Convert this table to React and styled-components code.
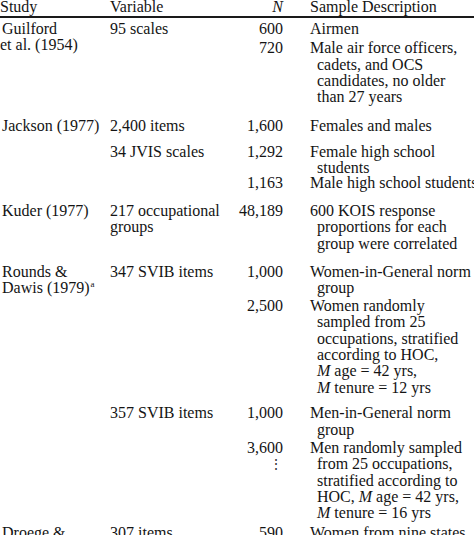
import React from 'react';
import styled, { createGlobalStyle } from 'styled-components';

const Global = createGlobalStyle`
  html, body { margin: 0; padding: 0; background: #fff; overflow: hidden; }
  body { font-family: "Liberation Serif", "Times New Roman", serif; color: #141414; }
`;

const Table = styled.div`
  width: 474px;
  margin-top: -1px;
  font-size: 16px;
  line-height: 16.3px;
`;

const HeaderRow = styled.div`
  display: flex;
  padding-bottom: 0.5px;
  border-bottom: 2px solid #1a1a1a;
  line-height: 16.5px;
`;

const Body = styled.div`
  display: flex;
  flex-direction: column;
  padding-top: 3px;
`;

const Group = styled.div`
  display: flex;
  margin-top: ${p => p.$mt || 0}px;
`;

const StudyCell = styled.div`
  width: ${p => p.$w || 108}px;
  flex: none;
  padding-left: ${p => (p.$pad == null ? 2 : p.$pad)}px;
  white-space: nowrap;
`;

const VarList = styled.div`
  display: flex;
  flex-direction: column;
  flex: 1;
`;

const VarRow = styled.div`
  display: flex;
  margin-top: ${p => p.$mt || 0}px;
`;

const VarCell = styled.div`
  width: 127px;
  flex: none;
  white-space: nowrap;
`;

const EntryList = styled.div`
  display: flex;
  flex-direction: column;
  flex: 1;
`;

const Entry = styled.div`
  display: flex;
  margin-top: ${p => p.$mt || 0}px;
`;

const NCell = styled.div`
  width: 46px;
  flex: none;
  text-align: right;
  white-space: nowrap;
  font-style: ${p => (p.$italic ? 'italic' : 'normal')};
  display: flex;
  flex-direction: column;
  align-items: flex-end;
`;

const Dots = styled.span`
  font-size: 14px;
  line-height: 16px;
  margin-top: 1px;
  color: #333;
`;

const DescCell = styled.div`
  padding-left: 27px;
  white-space: nowrap;
  display: flex;
  flex-direction: column;
`;

const Line = styled.span`
  display: block;
  padding-left: ${p => (p.$cont ? 7 : 0)}px;
  margin-left: ${p => p.$shift || 0}px;
`;

const I = styled.i`
  font-style: italic;
`;

const Sup = styled.sup`
  font-size: 9px;
  line-height: 0;
  vertical-align: 6px;
  margin-left: 1px;
`;

const data = [
  {
    study: ['Guilford', 'et al. (1954)'],
    studyShift: [0, -2],
    vars: [
      {
        name: ['95 scales'],
        entries: [
          { n: '600', d: ['Airmen'] },
          {
            n: '720',
            mt: 3,
            d: ['Male air force officers,', 'cadets, and OCS', 'candidates, no older', 'than 27 years'],
          },
        ],
      },
    ],
  },
  {
    study: ['Jackson (1977)'],
    mt: 12.5,
    vars: [
      { name: ['2,400 items'], entries: [{ n: '1,600', d: ['Females and males'] }] },
      {
        name: ['34 JVIS scales'],
        mt: 9.5,
        entries: [
          { n: '1,292', d: ['Female high school', 'students'] },
          { n: '1,163', mt: -1, d: ['Male high school students'] },
        ],
      },
    ],
  },
  {
    study: ['Kuder (1977)'],
    mt: 11.5,
    vars: [
      {
        name: ['217 occupational', 'groups'],
        entries: [
          {
            n: '48,189',
            d: ['600 KOIS response', 'proportions for each', 'group were correlated'],
          },
        ],
      },
    ],
  },
  {
    study: ['Rounds &', <>Dawis (1979)<Sup>a</Sup></>],
    mt: 11.5,
    vars: [
      {
        name: ['347 SVIB items'],
        entries: [
          { n: '1,000', d: ['Women-in-General norm', 'group'] },
          {
            n: '2,500',
            mt: 2,
            d: [
              'Women randomly',
              'sampled from 25',
              'occupations, stratified',
              'according to HOC,',
              <><I>M</I> age = 42 yrs,</>,
              <><I>M</I> tenure = 12 yrs</>,
            ],
          },
        ],
      },
      {
        name: ['357 SVIB items'],
        mt: 9.5,
        entries: [
          { n: '1,000', d: ['Men-in-General norm', 'group'] },
          {
            n: '3,600',
            mt: 2,
            dots: true,
            d: [
              'Men randomly sampled',
              'from 25 occupations,',
              'stratified according to',
              <>HOC, <I>M</I> age = 42 yrs,</>,
              <><I>M</I> tenure = 16 yrs</>,
            ],
          },
        ],
      },
    ],
  },
  {
    study: ['Droege &'],
    mt: 3,
    vars: [{ name: ['307 items'], entries: [{ n: '590', d: ['Women from nine states,'] }] }],
  },
];

export default function App() {
  return (
    <>
      <Global />
      <Table>
        <HeaderRow>
          <StudyCell $pad={0} $w={110}>Study</StudyCell>
          <VarCell>Variable</VarCell>
          <NCell $italic>N</NCell>
          <DescCell>Sample Description</DescCell>
        </HeaderRow>
        <Body>
          {data.map((g, gi) => (
            <Group key={gi} $mt={g.mt}>
              <StudyCell>
                {g.study.map((s, si) => (
                  <Line key={si} $shift={g.studyShift ? g.studyShift[si] : 0}>
                    {s}
                  </Line>
                ))}
              </StudyCell>
              <VarList>
                {g.vars.map((v, vi) => (
                  <VarRow key={vi} $mt={v.mt}>
                    <VarCell>
                      {v.name.map((s, si) => (
                        <Line key={si}>{s}</Line>
                      ))}
                    </VarCell>
                    <EntryList>
                      {v.entries.map((e, ei) => (
                        <Entry key={ei} $mt={e.mt}>
                          <NCell>
                            <span>{e.n}</span>
                            {e.dots && <Dots>⋮</Dots>}
                          </NCell>
                          <DescCell>
                            {e.d.map((s, si) => (
                              <Line key={si} $cont={si > 0}>
                                {s}
                              </Line>
                            ))}
                          </DescCell>
                        </Entry>
                      ))}
                    </EntryList>
                  </VarRow>
                ))}
              </VarList>
            </Group>
          ))}
        </Body>
      </Table>
    </>
  );
}
